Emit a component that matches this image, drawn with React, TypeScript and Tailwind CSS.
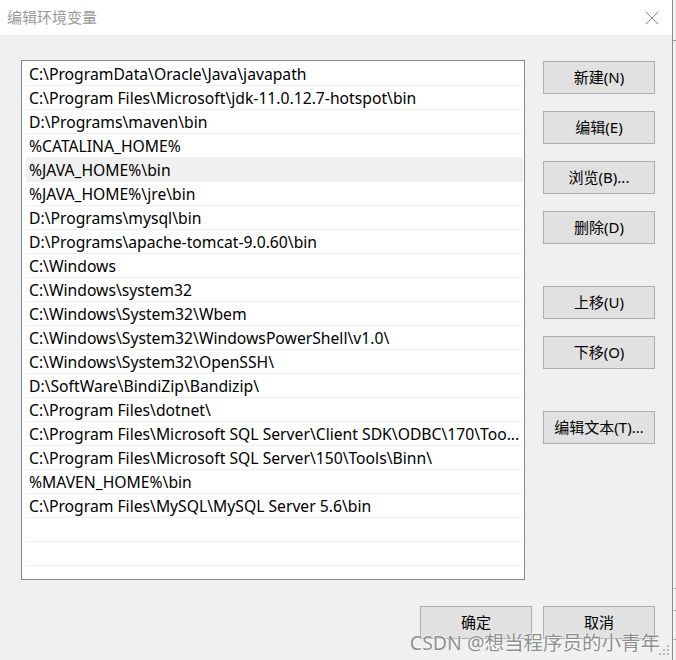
import { X } from "lucide-react";

const paths = [
  "C:\\ProgramData\\Oracle\\Java\\javapath",
  "C:\\Program Files\\Microsoft\\jdk-11.0.12.7-hotspot\\bin",
  "D:\\Programs\\maven\\bin",
  "%CATALINA_HOME%",
  "%JAVA_HOME%\\bin",
  "%JAVA_HOME%\\jre\\bin",
  "D:\\Programs\\mysql\\bin",
  "D:\\Programs\\apache-tomcat-9.0.60\\bin",
  "C:\\Windows",
  "C:\\Windows\\system32",
  "C:\\Windows\\System32\\Wbem",
  "C:\\Windows\\System32\\WindowsPowerShell\\v1.0\\",
  "C:\\Windows\\System32\\OpenSSH\\",
  "D:\\SoftWare\\BindiZip\\Bandizip\\",
  "C:\\Program Files\\dotnet\\",
  "C:\\Program Files\\Microsoft SQL Server\\Client SDK\\ODBC\\170\\Too...",
  "C:\\Program Files\\Microsoft SQL Server\\150\\Tools\\Binn\\",
  "%MAVEN_HOME%\\bin",
  "C:\\Program Files\\MySQL\\MySQL Server 5.6\\bin",
  "",
  "",
  "",
];

const font = "font-['Segoe_UI','Noto_Sans','Noto_Sans_CJK_SC',sans-serif]";

function WinButton({ label, className = "" }: { label: string; className?: string }) {
  return (
    <button
      className={`h-[33px] w-[112px] border border-[#adadad] bg-[#e1e1e1] text-[15px] text-black ${className}`}
    >
      {label}
    </button>
  );
}

export default function App() {
  return (
    <div className={`relative flex h-[660px] w-[676px] overflow-hidden bg-[#f0f0f0] ${font}`}>
      <div className="flex w-[672px] flex-col">
        {/* title bar */}
        <div className="flex h-[35px] items-center justify-between bg-white pl-[7px] pr-[8px]">
          <span className="text-[15px] text-[#9a9a9a]">编辑环境变量</span>
          <X className="h-6 w-6 text-[#8a8a8a]" strokeWidth={1} />
        </div>

        {/* body */}
        <div className="flex flex-1 flex-col bg-[#f0f0f0] pl-[21px] pr-[17px] pt-[25px]">
          <div className="flex justify-between">
            <div className="h-[520px] w-[504px] overflow-hidden border border-[#828790] bg-white pl-[4px] pr-[1px] pt-[1px]">
              {paths.map((p, i) => (
                <div
                  key={i}
                  className={`flex h-[24px] items-center whitespace-nowrap overflow-hidden border-b border-[#f0f0f0] pl-[3px] pt-[2px] text-[15.7px] leading-none text-black ${
                    i === 4 ? "bg-[#f0f0f0]" : ""
                  }`}
                >
                  {p}
                </div>
              ))}
            </div>

            <div className="flex w-[112px] flex-col pt-[1px]">
              <WinButton label="新建(N)" />
              <WinButton label="编辑(E)" className="mt-[17px]" />
              <WinButton label="浏览(B)..." className="mt-[17px]" />
              <WinButton label="删除(D)" className="mt-[17px]" />
              <WinButton label="上移(U)" className="mt-[42px]" />
              <WinButton label="下移(O)" className="mt-[17px]" />
              <WinButton label="编辑文本(T)..." className="mt-[42px]" />
            </div>
          </div>

          <div className="mt-[26px] flex justify-end gap-[11px]">
            <WinButton label="确定" className="w-[111px]" />
            <WinButton label="取消" />
          </div>
        </div>
      </div>

      {/* neighbouring window edge */}
      <div className="flex w-[4px] flex-col border-l border-[#8c8c8c] bg-[#f3f3f3]">
        <div className="mt-[40px] h-px bg-[#9a9a9a]" />
        <div className="mt-[547px] h-px bg-[#b0b0b0]" />
        <div className="mt-[21px] h-px bg-[#b0b0b0]" />
        <div className="mt-[28px] h-px bg-[#b0b0b0]" />
      </div>

      {/* size grip */}
      <svg className="absolute bottom-[4px] right-[6px]" width="12" height="12" viewBox="0 0 12 12">
        {[
          [9, 1],
          [9, 5],
          [5, 5],
          [9, 9],
          [5, 9],
          [1, 9],
        ].map(([x, y], i) => (
          <rect key={i} x={x} y={y} width="2" height="2" fill="#b8b8b8" />
        ))}
      </svg>

      {/* watermark */}
      <div className="pointer-events-none absolute bottom-[8px] right-[16px] text-[19.5px] leading-none text-[#8f8f8f] [text-shadow:0_0_2px_#fff,0_0_2px_#fff]">
        CSDN @想当程序员的小青年
      </div>
    </div>
  );
}
